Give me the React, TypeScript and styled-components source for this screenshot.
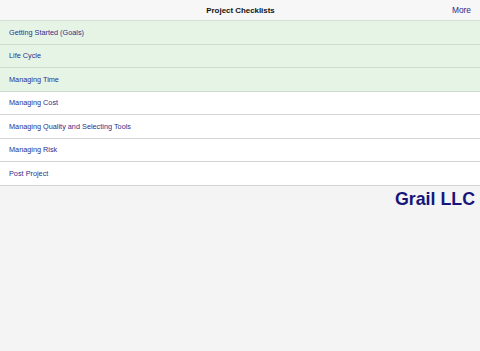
import React from "react";
import styled, { createGlobalStyle } from "styled-components";

const GlobalStyle = createGlobalStyle`
  html, body {
    margin: 0;
    padding: 0;
    background: #f4f4f4;
    font-family: "Liberation Sans", Arial, sans-serif;
  }
`;

const items = [
  { label: "Getting Started (Goals)", done: true },
  { label: "Life Cycle", done: true },
  { label: "Managing Time", done: true },
  { label: "Managing Cost", done: false },
  { label: "Managing Quality and Selecting Tools", done: false },
  { label: "Managing Risk", done: false },
  { label: "Post Project", done: false },
];

function App() {
  return (
    <Page>
      <GlobalStyle />
      <NavBar>
        <NavTitle>Project Checklists</NavTitle>
        <NavButton>More</NavButton>
      </NavBar>
      <List>
        {items.map((item) => (
          <Row key={item.label} $done={item.done}>
            {item.label}
          </Row>
        ))}
      </List>
      <Brand>Grail LLC</Brand>
    </Page>
  );
}

export default App;

const Page = styled.div`
  width: 480px;
  height: 351px;
  background: #f4f4f4;
  display: flex;
  flex-direction: column;
`;

const NavBar = styled.div`
  height: 21px;
  box-sizing: border-box;
  background: #f7f7f7;
  border-bottom: 1px solid #d6dcd6;
  display: flex;
  align-items: center;
  justify-content: center;
  position: relative;
`;

const NavTitle = styled.div`
  font-size: 7.9px;
  font-weight: bold;
  color: #111;
  margin-left: 1px;
`;

const NavButton = styled.div`
  position: absolute;
  right: 9px;
  top: 5px;
  font-size: 8.4px;
  color: #2f2c8c;
`;

const List = styled.div`
  display: flex;
  flex-direction: column;
`;

const Row = styled.div<{ $done: boolean }>`
  height: 23.5px;
  box-sizing: border-box;
  border-bottom: 1px solid ${(p) => (p.$done ? "#cfdccf" : "#d4d4d4")};
  background: ${(p) => (p.$done ? "#e6f4e6" : "#ffffff")};
  display: flex;
  align-items: center;
  padding-left: 9px;
  font-size: 7.3px;
  color: #2e2f8a;
`;

const Brand = styled.div`
  text-align: right;
  padding: 3px 5px 0 0;
  font-size: 17.8px;
  font-weight: bold;
  color: #16167a;
`;
